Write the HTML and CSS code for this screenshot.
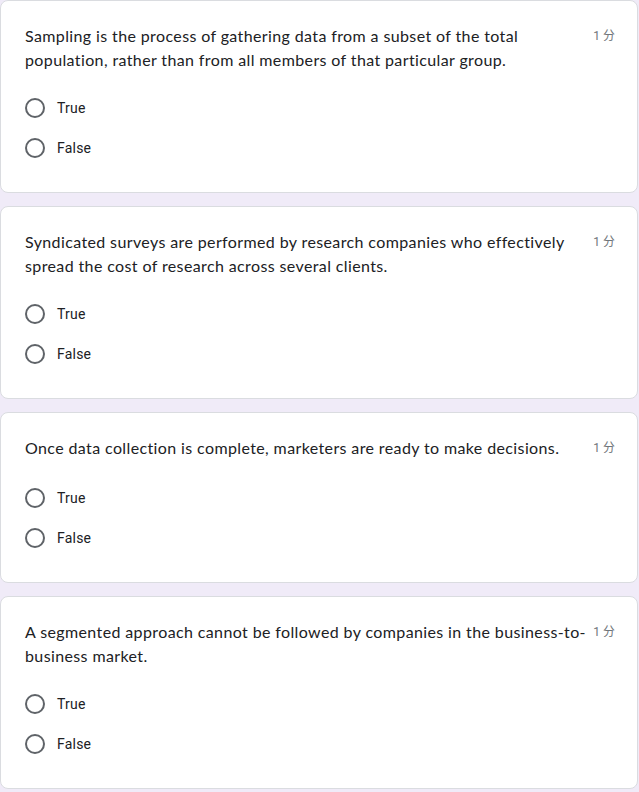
FILE: index.html
```html
<!DOCTYPE html>
<html lang="en">
<head>
    <meta charset="UTF-8">
    <meta name="viewport" content="width=device-width, initial-scale=1.0">
    <title>Quiz</title>
    <link rel="stylesheet" href="styles.css">
</head>
<body>
    <div class="form">
        <div class="question-card">
            <div class="question-header">
                <div class="question-text">Sampling is the process of gathering data from a subset of the total population, rather than from all members of that particular group.</div>
                <div class="points">1 分</div>
            </div>
            <div class="options">
                <label class="option"><span class="radio"></span><span class="option-label">True</span></label>
                <label class="option"><span class="radio"></span><span class="option-label">False</span></label>
            </div>
        </div>

        <div class="question-card">
            <div class="question-header">
                <div class="question-text">Syndicated surveys are performed by research companies who effectively spread the cost of research across several clients.</div>
                <div class="points">1 分</div>
            </div>
            <div class="options">
                <label class="option"><span class="radio"></span><span class="option-label">True</span></label>
                <label class="option"><span class="radio"></span><span class="option-label">False</span></label>
            </div>
        </div>

        <div class="question-card">
            <div class="question-header">
                <div class="question-text">Once data collection is complete, marketers are ready to make decisions.</div>
                <div class="points">1 分</div>
            </div>
            <div class="options">
                <label class="option"><span class="radio"></span><span class="option-label">True</span></label>
                <label class="option"><span class="radio"></span><span class="option-label">False</span></label>
            </div>
        </div>

        <div class="question-card">
            <div class="question-header">
                <div class="question-text">A segmented approach cannot be followed by companies in the business-to-business market.</div>
                <div class="points">1 分</div>
            </div>
            <div class="options">
                <label class="option"><span class="radio"></span><span class="option-label">True</span></label>
                <label class="option"><span class="radio"></span><span class="option-label">False</span></label>
            </div>
        </div>
    </div>
</body>
</html>
```

FILE: styles.css
```css
body {
    margin: 0;
    padding: 0;
    background-color: #f0ebf8;
    font-family: Roboto, Arial, sans-serif;
    color: #202124;
}

.form {
    display: flex;
    flex-direction: column;
    gap: 13px;
    padding-right: 1px;
}

.question-card {
    background-color: #ffffff;
    border: 1px solid #dadce0;
    border-radius: 8px;
    padding: 23px 22px 24px 24px;
}

.question-header {
    display: flex;
    align-items: flex-start;
    min-height: 26px;
}

.question-text {
    flex: 1;
    font-family: Lato, Roboto, sans-serif;
    font-size: 16px;
    line-height: 24px;
    letter-spacing: 0.38px;
}

.points {
    margin-left: 5px;
    font-size: 12px;
    line-height: 24px;
    color: #70757a;
    white-space: nowrap;
    font-family: Roboto, "Noto Sans CJK SC", sans-serif;
}

.options {
    margin-top: 16px;
    display: flex;
    flex-direction: column;
}

.option {
    display: flex;
    align-items: center;
    height: 40px;
    cursor: pointer;
}

.radio {
    width: 16px;
    height: 16px;
    border: 2px solid #5f6368;
    border-radius: 50%;
}

.option-label {
    margin-left: 12px;
    font-size: 14px;
    letter-spacing: 0.2px;
}
```
